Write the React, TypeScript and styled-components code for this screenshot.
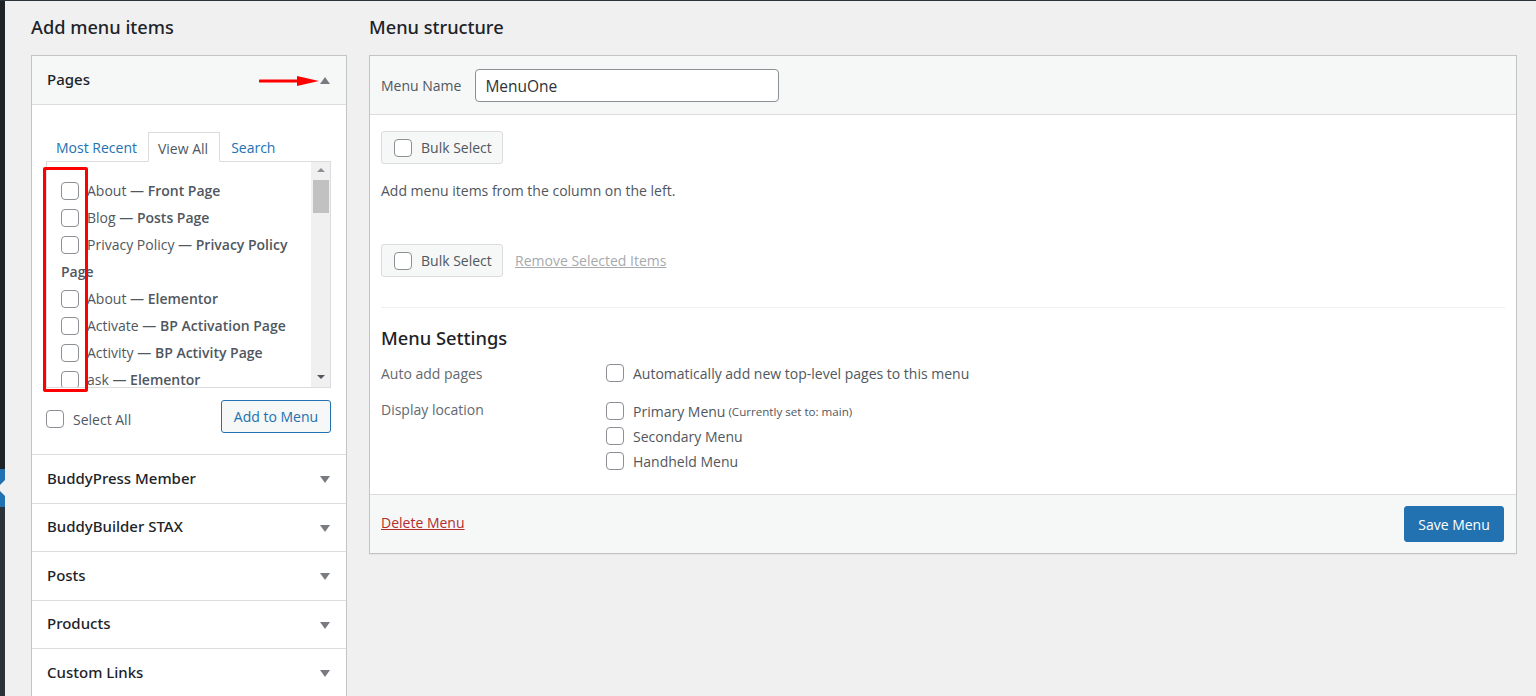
import React from 'react';
import styled, { createGlobalStyle } from 'styled-components';

const Global = createGlobalStyle`
  html, body { margin: 0; padding: 0; height: 100%; overflow: hidden; background: #f0f0f1; }
  #root { height: 100%; }
  * { box-sizing: border-box; }
  body { font-family: "Open Sans", "Noto Sans", sans-serif; font-size: 14px; color: #50575e; }
`;

const Page = styled.div`
  display: flex; height: 696px; overflow: hidden; background: #f0f0f1;
  border-top: 1px solid #2c3338;
`;
const AdminRail = styled.div`
  width: 5px; flex: none; background: #1d2327; display: flex; flex-direction: column;
`;
const RailTop = styled.div`height: 468px; background: #1d2327;`;
const RailActive = styled.div`height: 38px; background: #2271b1; position: relative; overflow: hidden;`;
const RailNotch = styled.div`
  position: absolute; left: -3px; top: 9px; width: 0; height: 0;
  border-top: 10px solid #2271b1; border-bottom: 10px solid #2271b1;
  border-right: 10px solid #f0f0f1;
`;
const RailRest = styled.div`flex: 1; background: #2c3338;`;
const Main = styled.div`
  flex: 1; display: flex; gap: 22px; padding: 0 19px 0 26px; min-width: 0;
`;
const LeftCol = styled.div`width: 316px; flex: none;`;
const RightCol = styled.div`flex: 1; min-width: 0;`;
const ColTitle = styled.h2`
  margin: 0; height: 54px; padding-top: 12px; font-family: "Noto Sans", sans-serif; font-size: 18.2px; line-height: 28px; font-weight: 500;
  color: #1d2327;
`;
const Accordion = styled.div`
  border: 1px solid #c3c4c7; border-bottom: none; background: #fff; position: relative;
`;
const SectionHead = styled.div<{ $open?: boolean }>`
  height: 48.5px; display: flex; align-items: center; justify-content: space-between;
  padding: 0 16px 2px 15px; font-family: "Noto Sans", sans-serif; font-size: 15px; font-weight: 500; color: #1d2327;
  background: ${p => (p.$open ? '#f6f7f7' : '#fff')};
  border-bottom: 1px solid #dcdcde;
`;
const Caret = styled.span<{ $up?: boolean }>`
  width: 0; height: 0; border-left: 5px solid transparent; border-right: 5px solid transparent; margin-top: 4px;
  ${p => (p.$up ? 'border-bottom: 7px solid #787c82;' : 'border-top: 7px solid #787c82;')}
`;
const PagesBody = styled.div`
  padding: 27px 15px 21px 14px; border-bottom: 1px solid #dcdcde; height: 350.5px;
`;
const Tabs = styled.div`display: flex; height: 29px; align-items: flex-end; position: relative; z-index: 1;`;
const Tab = styled.span<{ $active?: boolean }>`
  height: 29px; line-height: 31px; padding: 0 10px; font-size: 14px;
  color: ${p => (p.$active ? '#50575e' : '#2271b1')};
  ${p => p.$active ? 'background:#fff;border:1px solid #dcdcde;border-bottom:1px solid #fff;margin:0 1px -1px 1px;height:30px;padding:0 11px 0 9px;' : ''}
`;
const ListBox = styled.div`
  display: flex; height: 227px; border: 1px solid #dcdcde; overflow: hidden; background: #fff;
`;
const PageList = styled.div`
  flex: 1; min-width: 0; padding: 15px 20px 0 14px; line-height: 27px; font-size: 14px;
  color: #50575e;
  b { font-weight: 600; }
`;
const PageRow = styled.div`margin: 0;`;
const Box = styled.span<{ $gap?: number }>`
  display: inline-block; width: 18px; height: 18px; flex: none; border: 1px solid #8c8f94; border-radius: 4px;
  background: #fff; vertical-align: -4px; margin-right: ${p => p.$gap ?? 8}px;
`;
const Scrollbar = styled.div`
  width: 19px; flex: none; background: #f0f0f1; display: flex; flex-direction: column; align-items: center; position: relative;
`;
const ScrollUp = styled.span`
  margin-top: 6px; width: 0; height: 0; border-left: 4px solid transparent; border-right: 4px solid transparent;
  border-bottom: 4px solid #8c8f94;
`;
const ScrollThumb = styled.span`
  margin-top: 8px; width: 16px; height: 33px; background: #c1c1c1;
`;
const ScrollDown = styled.span`
  margin-top: auto; margin-bottom: 8px; width: 0; height: 0; border-left: 4px solid transparent; border-right: 4px solid transparent;
  border-top: 4px solid #50575e;
`;
const PagesFoot = styled.div`display: flex; justify-content: space-between; align-items: flex-start; margin-top: 12px;`;
const SelectAll = styled.label`
  display: flex; align-items: center; margin-top: 10px; font-size: 14px;
`;
const OutlineBtn = styled.button`
  width: 110px; height: 33px; border: 1px solid #2271b1; border-radius: 3px; background: #f6f7f7; color: #2271b1;
  font: inherit; font-size: 14px; padding: 1px 0 0;
`;
const Panel = styled.div`
  border: 1px solid #c3c4c7; background: #fff; height: 499px; display: flex; flex-direction: column;
  box-shadow: 0 1px 1px rgba(0,0,0,.04);
`;
const PanelHead = styled.div`
  height: 59px; flex: none; background: #f6f7f7; border-bottom: 1px solid #dcdcde; display: flex; align-items: center; padding: 0 11px;
  gap: 14px;
`;
const NameLabel = styled.label`font-size: 14px;`;
const NameInput = styled.div`
  width: 304px; height: 33px; border: 1px solid #8c8f94; border-radius: 4px; background: #fff; padding: 0 9px;
  font-size: 15.5px; line-height: 33px; color: #2c3338;
`;
const PanelBody = styled.div`flex: 1; padding: 16px 11px 0;`;
const BulkRow = styled.div`display: flex; align-items: center; gap: 12px;`;
const BulkBtn = styled.div`
  width: 122px; height: 33px; border: 1px solid #dcdcde; border-radius: 3px; background: #f6f7f7; display: flex; align-items: center;
  padding-left: 12px; font-size: 14px;
`;
const DisabledLink = styled.span`color: #a7aaad; text-decoration: underline; font-size: 14px;`;
const Hint = styled.p`margin: 17px 0 43px; height: 20px; line-height: 20px; font-size: 14px;`;
const Divider = styled.hr`border: 0; border-top: 1px solid #f0f0f1; margin: 30px 0 0;`;
const SettingsTitle = styled.h3`
  margin: 16px 0 0; font-family: "Noto Sans", sans-serif; font-size: 18.3px; line-height: 28px; font-weight: 500; color: #1d2327;
`;
const SettingRow = styled.div<{ $top: number }>`display: grid; grid-template-columns: 225px 1fr; margin-top: ${p => p.$top}px;`;
const SettingLabel = styled.div`font-size: 14px; line-height: 20px; color: #646970;`;
const Options = styled.div<{ $pad?: number }>`display: flex; flex-direction: column; gap: 7px; padding-top: ${p => p.$pad ?? 0}px;`;
const Option = styled.label`display: flex; align-items: center; height: 18px; font-size: 14px; white-space: nowrap;`;
const Small = styled.small`font-size: 11.6px; margin-left: 3px;`;
const PanelFoot = styled.div`
  height: 59px; flex: none; background: #f6f7f7; border-top: 1px solid #dcdcde; display: flex; align-items: center; justify-content: space-between;
  padding: 0 12px 0 11px;
`;
const DeleteLink = styled.a`color: #b32d2e; text-decoration: underline; font-size: 14px; margin-top: -4px;`;
const SaveBtn = styled.button`
  width: 100px; height: 36px; background: #2271b1; border: 1px solid #2271b1; border-radius: 3px; color: #fff; font: inherit;
  font-size: 14px; padding: 1px 0 0;
`;
const RedBox = styled.div`
  position: absolute; left: 11px; top: 111px; width: 45px; height: 225px; border: 3px solid #f00; border-radius: 2px; pointer-events: none;
`;
const RedArrow = styled.svg`position: absolute; left: 227px; top: 17px; pointer-events: none;`;

const pages: [string, string][] = [
  ['About', 'Front Page'],
  ['Blog', 'Posts Page'],
  ['Privacy Policy', 'Privacy Policy Page'],
  ['About', 'Elementor'],
  ['Activate', 'BP Activation Page'],
  ['Activity', 'BP Activity Page'],
  ['ask', 'Elementor'],
];
const closed = ['BuddyPress Member', 'BuddyBuilder STAX', 'Posts', 'Products', 'Custom Links'];

export default function App() {
  return (
    <Page>
      <Global />
      <AdminRail>
        <RailTop />
        <RailActive><RailNotch /></RailActive>
        <RailRest />
      </AdminRail>
      <Main>
        <LeftCol>
          <ColTitle>Add menu items</ColTitle>
          <Accordion>
            <SectionHead $open>Pages<Caret $up /></SectionHead>
            <PagesBody>
              <Tabs>
                <Tab>Most Recent</Tab>
                <Tab $active>View All</Tab>
                <Tab>Search</Tab>
              </Tabs>
              <ListBox>
                <PageList>
                  {pages.map(([a, b], i) => (
                    <PageRow key={i}><Box />{a} — <b>{b}</b></PageRow>
                  ))}
                </PageList>
                <Scrollbar><ScrollUp /><ScrollThumb /><ScrollDown /></Scrollbar>
              </ListBox>
              <PagesFoot>
                <SelectAll><Box $gap={9} />Select All</SelectAll>
                <OutlineBtn>Add to Menu</OutlineBtn>
              </PagesFoot>
            </PagesBody>
            {closed.map(t => <SectionHead key={t}>{t}<Caret /></SectionHead>)}
            <RedBox />
            <RedArrow width="62" height="16" viewBox="0 0 62 16">
              <path d="M1 8h40" stroke="#f00" strokeWidth="3" strokeLinecap="round" />
              <path d="M38 3l22 5-22 5z" fill="#f00" />
            </RedArrow>
          </Accordion>
        </LeftCol>
        <RightCol>
          <ColTitle>Menu structure</ColTitle>
          <Panel>
            <PanelHead>
              <NameLabel>Menu Name</NameLabel>
              <NameInput>MenuOne</NameInput>
            </PanelHead>
            <PanelBody>
              <BulkBtn><Box $gap={9} />Bulk Select</BulkBtn>
              <Hint>Add menu items from the column on the left.</Hint>
              <BulkRow>
                <BulkBtn><Box $gap={9} />Bulk Select</BulkBtn>
                <DisabledLink>Remove Selected Items</DisabledLink>
              </BulkRow>
              <Divider />
              <SettingsTitle>Menu Settings</SettingsTitle>
              <SettingRow $top={12}>
                <SettingLabel>Auto add pages</SettingLabel>
                <Options><Option><Box $gap={9} />Automatically add new top-level pages to this menu</Option></Options>
              </SettingRow>
              <SettingRow $top={16}>
                <SettingLabel>Display location</SettingLabel>
                <Options $pad={2}>
                  <Option><Box $gap={9} />Primary Menu<Small>(Currently set to: main)</Small></Option>
                  <Option><Box $gap={9} />Secondary Menu</Option>
                  <Option><Box $gap={9} />Handheld Menu</Option>
                </Options>
              </SettingRow>
            </PanelBody>
            <PanelFoot>
              <DeleteLink>Delete Menu</DeleteLink>
              <SaveBtn>Save Menu</SaveBtn>
            </PanelFoot>
          </Panel>
        </RightCol>
      </Main>
    </Page>
  );
}
